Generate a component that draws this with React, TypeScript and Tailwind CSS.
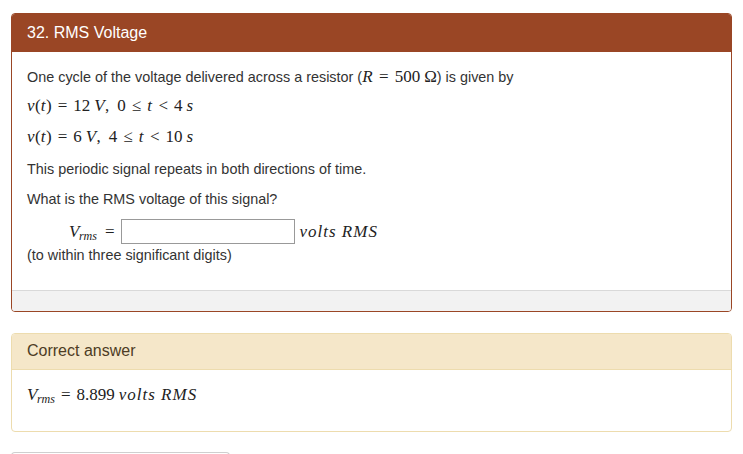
import React from "react";

const serif = { fontFamily: '"Liberation Serif", "DejaVu Serif", serif' };

function M({ children }: { children: React.ReactNode }) {
  return (
    <span className="text-[17px] text-[#222] inline-flex items-baseline whitespace-nowrap" style={serif}>
      {children}
    </span>
  );
}

function I({ children, className = "" }: { children: React.ReactNode; className?: string }) {
  return <i className={`tracking-[0.5px] ${className}`}>{children}</i>;
}

// relation / operator with TeX-ish spacing
function Op({ children }: { children: React.ReactNode }) {
  return <span className="mx-[6px]">{children}</span>;
}

function Vrms() {
  return (
    <span className="inline-flex items-baseline">
      <I>V</I>
      <i className="text-[12px] relative top-[3px] -ml-[1px]">rms</i>
    </span>
  );
}

export default function App() {
  return (
    <div
      className="min-h-screen bg-white px-[11px] pt-[13px] text-[14.4px] text-[#333]"
      style={{ fontFamily: '"Liberation Sans", Arial, sans-serif' }}
    >
      <div className="w-[721px] border border-[#9a4625] rounded-[4px] overflow-hidden">
        <div className="h-[39px] bg-[#9a4625] px-[15px] flex items-center text-white text-[16px] -mt-px">
          32. RMS Voltage
        </div>
        <div className="px-[15px] pt-[15px] pb-[25px]">
          <div className="h-[20px] leading-[20px]">
            One cycle of the voltage delivered across a resistor (
            <M>
              <I>R</I>
              <Op>=</Op>500<span className="ml-[4px]">Ω</span>
            </M>
            ) is given by
          </div>
          <div className="h-[20px] leading-[20px] mt-[9px]">
            <M>
              <I>v</I>(<I>t</I>)<Op>=</Op>12<span className="ml-[4px]" />
              <I>V</I>,<span className="ml-[8px]" />0<Op>≤</Op>
              <I>t</I>
              <Op>&lt;</Op>4<span className="ml-[4px]" />
              <I>s</I>
            </M>
          </div>
          <div className="h-[20px] leading-[20px] mt-[11px]">
            <M>
              <I>v</I>(<I>t</I>)<Op>=</Op>6<span className="ml-[4px]" />
              <I>V</I>,<span className="ml-[8px]" />4<Op>≤</Op>
              <I>t</I>
              <Op>&lt;</Op>10<span className="ml-[4px]" />
              <I>s</I>
            </M>
          </div>
          <div className="h-[20px] leading-[20px] mt-[12px]">
            This periodic signal repeats in both directions of time.
          </div>
          <div className="h-[20px] leading-[20px] mt-[10px]">
            What is the RMS voltage of this signal?
          </div>
          <div className="flex items-center h-[25px] mt-[10px] pl-[42px]">
            <M>
              <Vrms />
              <span className="ml-[8px]">=</span>
            </M>
            <div className="ml-[6px] w-[174px] h-[25px] border border-[#999] bg-white" />
            <span className="ml-[5px]">
              <M>
                <I className="tracking-[1px]">volts RMS</I>
              </M>
            </span>
          </div>
          <div className="h-[20px] leading-[20px] mt-[1px]">
            (to within three significant digits)
          </div>
        </div>
        <div className="h-[21px] bg-[#f2f2f2] border-t border-[#d9d9d9]" />
      </div>

      <div className="w-[721px] mt-[21px] border border-[#eddcae] rounded-[4px] overflow-hidden">
        <div className="h-[37px] bg-[#f5e7c9] border-b border-[#eddcae] px-[15px] flex items-center text-[16px] text-[#4d3c24] -mt-px">
          Correct answer
        </div>
        <div className="px-[15px] pt-[15px] pb-[26px]">
          <div className="h-[20px] leading-[20px]">
            <M>
              <Vrms />
              <Op>=</Op>8.899<span className="ml-[4px]" />
              <I className="tracking-[1px]">volts RMS</I>
            </M>
          </div>
        </div>
      </div>

      <div className="w-[219px] h-[12px] mt-[20px] border border-[#cfcfcf] border-b-0 rounded-t-[4px]" />
    </div>
  );
}
